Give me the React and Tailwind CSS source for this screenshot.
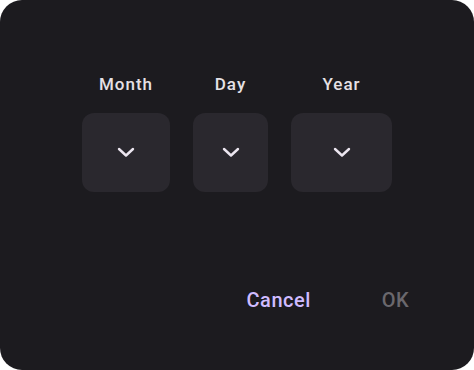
import React from "react";

function Chevron() {
  return (
    <svg width="18" height="11" viewBox="0 0 18 11" fill="none">
      <path d="M2 2 L9 8.5 L16 2" stroke="#ECE6F0" strokeWidth="2.4" strokeLinecap="round" strokeLinejoin="round" />
    </svg>
  );
}

const fields = [
  { label: "Month", width: "w-[88px]" },
  { label: "Day", width: "w-[75px]" },
  { label: "Year", width: "w-[101px]" },
];

export default function App() {
  return (
    <div className="w-[474px] h-[370px] bg-white" style={{ fontFamily: "Roboto, 'Noto Sans', sans-serif" }}>
      <div className="w-full h-full bg-[#1c1b1f] rounded-[22px] flex flex-col">
        <div className="flex justify-center gap-[23px] pt-[72px]">
          {fields.map((f) => (
            <div key={f.label} className={`flex flex-col items-center ${f.width}`}>
              <span className="text-[17px] leading-6 font-medium tracking-[1px] text-[#e6e1e5]">
                {f.label}
              </span>
              <button className="mt-[17px] w-full h-[79px] rounded-xl bg-[#2a282e] flex items-center justify-center">
                <Chevron />
              </button>
            </div>
          ))}
        </div>

        <div className="flex justify-end items-center mt-[96px] pr-[65px] gap-[71px]">
          <button className="text-[20px] leading-6 font-medium tracking-[0.5px] text-[#d0bcff]">Cancel</button>
          <button className="text-[20px] leading-6 font-medium tracking-[0.4px] text-[#6a686d]">OK</button>
        </div>
      </div>
    </div>
  );
}
